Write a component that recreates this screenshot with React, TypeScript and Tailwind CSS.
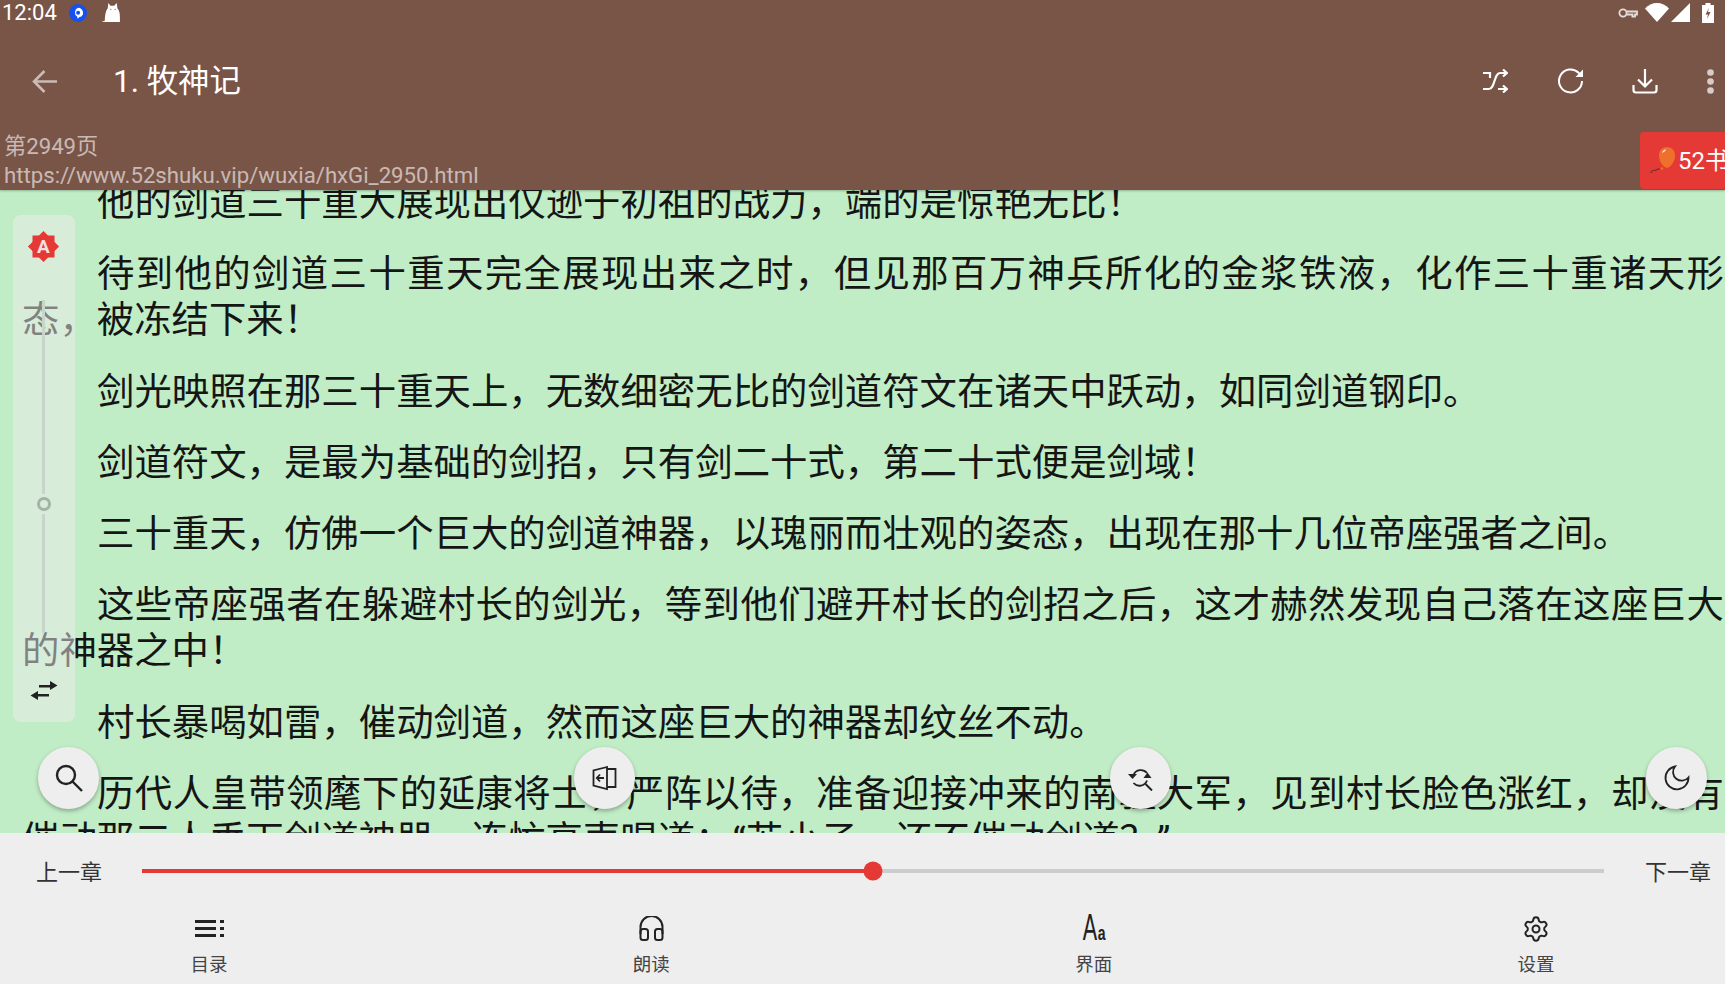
import React from "react";
import { Settings } from "lucide-react";

const paragraphs: string[][] = [
  ["他的剑道三十重大展现出仅逊于初祖的战力，端的是惊艳无比！"],
  ["待到他的剑道三十重天完全展现出来之时，但见那百万神兵所化的金浆铁液，化作三十重诸天形", "态，被冻结下来！"],
  ["剑光映照在那三十重天上，无数细密无比的剑道符文在诸天中跃动，如同剑道钢印。"],
  ["剑道符文，是最为基础的剑招，只有剑二十式，第二十式便是剑域！"],
  ["三十重天，仿佛一个巨大的剑道神器，以瑰丽而壮观的姿态，出现在那十几位帝座强者之间。"],
  ["这些帝座强者在躲避村长的剑光，等到他们避开村长的剑招之后，这才赫然发现自己落在这座巨大", "的神器之中！"],
  ["村长暴喝如雷，催动剑道，然而这座巨大的神器却纹丝不动。"],
  ["历代人皇带领麾下的延康将士，严阵以待，准备迎接冲来的南疆大军，见到村长脸色涨红，却没有", "催动那二人垂下剑道神器，连忙高声喝道：“苏小子，还不催动剑道？”"],
];

function StatusBar() {
  return (
    <div className="h-[30px] flex items-start justify-between text-white">
      <div className="flex items-center h-[25px]">
        <span className="ml-[2px] text-[22px] leading-[25px]">12:04</span>
        <svg className="ml-[12px] w-[18px] h-[18px]" viewBox="0 0 17 17">
          <circle cx="8.500" cy="8.500" r="8.500" fill="#1550f0" />
          <path d="M8.500 3.600a4.800 4.800 0 0 1 4.800 4.800c0 2.400-1.800 3.800-3.400 3.900l-1.600 1.600-.7-2a4.800 4.800 0 0 1 .9-8.300Z" fill="#fff" />
          <circle cx="8.600" cy="8.300" r="1.900" fill="#1550f0" />
        </svg>
        <svg className="ml-[14px] w-[21px] h-[21px]" viewBox="0 0 20 20" fill="#fff">
          <path d="M7 1l2 2.500h3.500L15 1l.6 5c1.800 2 2.400 5 2.400 8v5H5c-2 0-4-.4-4.500-1.400.8.6 2 .7 3 .4C4 13 4 9 6.400 6Z" />
          <circle cx="9.400" cy="7" r=".6" fill="#795548" />
          <circle cx="13.400" cy="7" r=".6" fill="#795548" />
        </svg>
      </div>
      <div className="flex items-center h-[25px] pr-[11px]">
        <svg className="w-[20px] h-[12px]" viewBox="0 0 20 12" fill="none" stroke="#fff" strokeWidth="1.800" opacity="0.8">
          <circle cx="5" cy="6" r="3.600" />
          <path d="M8.600 4.500H19v3h-2v2h-2.600v-2H8.600" />
        </svg>
        <svg className="ml-[7px] w-[24px] h-[19px]" viewBox="0 0 24 19" fill="#fff">
          <path d="M0 5.500C3 2 7.500 0 12 0s9 2 12 5.500L12 19Z" />
        </svg>
        <svg className="ml-[2px] w-[19px] h-[19px]" viewBox="0 0 19 19" fill="#fff">
          <path d="M19 0v19H0Z" />
        </svg>
        <svg className="ml-[12px] w-[12px] h-[20px]" viewBox="0 0 12 20">
          <path d="M3.500 0h5v2H12v18H0V2h3.500Z" fill="#fff" />
          <path d="M7 5 3.500 11.500H6L5 16l3.500-7H6Z" fill="#795548" />
        </svg>
      </div>
    </div>
  );
}

function Toolbar() {
  return (
    <div className="h-[102px] flex items-center relative">
      <svg className="ml-[32px] w-[25px] h-[25px]" viewBox="0 0 25 25" fill="none" stroke="#fff" strokeOpacity="0.6" strokeWidth="2.600">
        <path d="M25 12.500H2M12.500 2 2 12.500 12.500 23" />
      </svg>
      <span className="ml-[56px] pt-[2px] text-[31.400px] leading-[36px] text-white">1. 牧神记</span>
      <div className="flex-1" />
      <svg className="w-[26px] h-[24px]" viewBox="0 0 26 24" fill="none" stroke="#fff" strokeWidth="2.200">
        <path d="M1 4h7v5M1 20h6c6 0 5-16 11-16h7M21 .500 25 4l-4 3.500M16 20h9M21 16.500l4 3.500-4 3.500" />
      </svg>
      <svg className="ml-[50px] w-[26px] h-[26px]" viewBox="0 0 26 26" fill="none" stroke="#fff" strokeWidth="2">
        <path d="M24 13a11.500 11.500 0 1 1-3.400-8.200L24 8" />
        <path d="M25 1.500V9h-7.500Z" fill="#fff" stroke="none" />
      </svg>
      <svg className="ml-[48px] w-[26px] h-[26px]" viewBox="0 0 26 26" fill="none" stroke="#fff" strokeWidth="2.200">
        <path d="M1.500 17v5a2.500 2.500 0 0 0 2.500 2.500h18a2.500 2.500 0 0 0 2.500-2.500v-5M13 1v17M6 11.500l7 7 7-7" />
      </svg>
      <svg className="ml-[49px] mr-[11px] w-[7px] h-[25px]" viewBox="0 0 7 25" fill="#fff" fillOpacity="0.7">
        <circle cx="3.500" cy="3.500" r="3.300" />
        <circle cx="3.500" cy="12.500" r="3.300" />
        <circle cx="3.500" cy="21.500" r="3.300" />
      </svg>
    </div>
  );
}

function InfoRow() {
  return (
    <div className="h-[58px] flex justify-between">
      <div className="pl-[4px] text-white/60">
        <div className="text-[22.200px] leading-[29px]">第2949页</div>
        <div className="text-[22.200px] leading-[29px]">https://www.52shuku.vip/wuxia/hxGi_2950.html</div>
      </div>
      <div className="w-[85px] h-[57px] bg-[#e53935] rounded-l-[4px] flex items-center overflow-hidden whitespace-nowrap text-white text-[24px]">
        <svg className="ml-[10px] shrink-0 w-[26px] h-[27px]" viewBox="0 0 26 27">
          <path d="M1 26c0-3 3-2 5-3s2-1 4-1" fill="none" stroke="#4a3030" strokeWidth="1" />
          <path d="M17 0c4.700 0 8 3.500 8 8.500 0 6-4.500 12-8 12.500-3.500-.5-8-6-8-12.500C9 3.500 12.300 0 17 0Z" fill="#ef6f2c" />
          <path d="M10 22l1.500-2 2 1-1 2Z" fill="#ef6f2c" />
          <path d="M12 6c.5-2 2-3.500 4-3.700-.3 1.700-2 3-4 3.700Z" fill="#fff" fillOpacity="0.85" />
        </svg>
        <span className="ml-[2px] leading-none">52书</span>
      </div>
    </div>
  );
}

function SideBar() {
  return (
    <div className="absolute left-[13px] top-[25px] w-[62px] h-[507px] pr-[1px] rounded-[8px] bg-[#eeeeee]/50 flex flex-col items-center">
      <svg className="mt-[14px] w-[35px] h-[35px] shrink-0" viewBox="0 0 35 35">
        <rect x="6.500" y="6.500" width="22" height="22" fill="#e53935" />
        <rect x="6.500" y="6.500" width="22" height="22" fill="#e53935" transform="rotate(45 17.500 17.500)" />
        <text x="17.500" y="24" textAnchor="middle" fontSize="19" fontWeight="700" fill="#f3dcdc" fontFamily="Roboto, sans-serif">A</text>
      </svg>
      <div className="mt-[36px] w-[3px] h-[194px] bg-[#c6d6c9]" />
      <div className="my-[3px] w-[14px] h-[14px] shrink-0 rounded-full border-[3px] border-[#a3b3a6]" />
      <div className="w-[3px] h-[119px] bg-[#c6d6c9]" />
      <svg className="mt-[47px] w-[28px] h-[21px] shrink-0" viewBox="0 0 28 21" fill="#222">
        <path d="M9 5h11V1L27.500 5.500 20 10V7.400H9Z" />
        <path d="M19 14H8v-3L.5 15.500 8 20v-3.400h11Z" />
      </svg>
    </div>
  );
}

function Fab({ className, children }: { className: string; children: React.ReactNode }) {
  return (
    <div className={"absolute top-[557px] w-[61px] h-[62px] rounded-full bg-[#eeeeee] flex items-center justify-center shadow-[0_2px_4px_rgba(0,0,0,0.3)] " + className}>
      {children}
    </div>
  );
}

function Reader() {
  return (
    <div className="flex-1 relative overflow-hidden bg-[#c0edc6]">
      <div className="-mt-[10px] pl-[22px] text-[37.400px] leading-[46px] text-[#151515] whitespace-nowrap">
        {paragraphs.map((lines, i) => (
          <div key={i} className="mb-[25.250px]">
            {lines[1] ? (
              <>
                <div className="w-[1702px] indent-[75px] whitespace-normal text-justify [text-align-last:justify] [text-justify:inter-character]">{lines[0]}</div>
                <div>{lines[1]}</div>
              </>
            ) : (
              <div className="indent-[75px]">{lines[0]}</div>
            )}
          </div>
        ))}
      </div>
      <SideBar />
      <Fab className="left-[38px]">
        <svg className="w-[28px] h-[28px]" viewBox="0 0 28 28" fill="none" stroke="#222" strokeWidth="2.400">
          <circle cx="11" cy="11" r="9" />
          <path d="M17.500 17.500 27 27" />
        </svg>
      </Fab>
      <Fab className="left-[574px]">
        <svg className="w-[25px] h-[25px]" viewBox="0 0 25 25" fill="none" stroke="#222" strokeWidth="1.800">
          <path d="M15 1 1.500 4.500v15L15 23Z" />
          <path d="M15 3h8.500v18H15" />
          <path d="M12 12H5M8 8.500 4.800 12 8 15.500" />
        </svg>
      </Fab>
      <Fab className="left-[1110px]">
        <svg className="w-[27px] h-[25px]" viewBox="0 0 27 25" fill="none" stroke="#222" strokeWidth="1.800">
          <path d="M20 14.500a8 8 0 0 1-13.500 2.500" />
          <path d="M6.500 9a8 8 0 0 1 13.500-2" />
          <path d="M1 9h9L5.500 14Z" fill="#222" stroke="none" transform="translate(0 -1)" />
          <path d="M16.500 12h8L20.500 6.500Z" fill="#222" stroke="none" />
          <path d="M18.500 18l6.500 6.500" strokeWidth="2" />
        </svg>
      </Fab>
      <Fab className="left-[1646px]">
        <svg className="w-[26px] h-[26px]" viewBox="0 0 26 26" fill="none" stroke="#222" strokeWidth="1.800">
          <path d="M11 1.500a8.500 8.500 0 0 0 13.500 11A11.500 11.500 0 1 1 11 1.500Z" />
        </svg>
      </Fab>
    </div>
  );
}

function Tab({ label, children }: { label: string; children: React.ReactNode }) {
  return (
    <div className="w-[64px] flex flex-col items-center">
      <div className="h-[25px] flex items-center justify-center">{children}</div>
      <div className="mt-[12px] text-[18.500px] leading-[24px] text-[#444]">{label}</div>
    </div>
  );
}

function BottomPanel() {
  return (
    <div className="h-[151px] bg-[#eeeeee] shrink-0">
      <div className="h-[76px] flex items-center text-[#333] text-[22px]">
        <div className="w-[142px] pl-[36px] pt-[3px] leading-none">上一章</div>
        <div className="flex-1 h-[4px] bg-[#cccccc] relative">
          <div className="w-1/2 h-full bg-[#e53935]" />
          <div className="absolute left-1/2 top-1/2 -translate-x-1/2 -translate-y-1/2 w-[19px] h-[19px] rounded-full bg-[#e53935]" />
        </div>
        <div className="w-[121px] pl-[41px] pt-[3px] leading-none">下一章</div>
      </div>
      <div className="pt-[7px] pl-[177px] pr-[157px] flex justify-between">
        <Tab label="目录">
          <svg className="w-[29px] h-[17px]" viewBox="0 0 29 17" fill="#222">
            <rect x="0" y="0" width="21" height="3" />
            <rect x="0" y="7" width="21" height="3" />
            <rect x="0" y="14" width="21" height="3" />
            <rect x="25" y="0" width="4" height="3" />
            <rect x="25" y="7" width="4" height="3" />
            <rect x="25" y="14" width="4" height="3" />
          </svg>
        </Tab>
        <Tab label="朗读">
          <svg className="w-[25px] h-[25px]" viewBox="0 0 25 25" fill="none" stroke="#222" strokeWidth="2">
            <path d="M1.500 18V11a11 11 0 0 1 22 0v7" />
            <rect x="1.500" y="13" width="7.500" height="11" rx="2.500" />
            <rect x="16" y="13" width="7.500" height="11" rx="2.500" />
          </svg>
        </Tab>
        <Tab label="界面">
          <div className="flex items-end h-[25px] text-[#222] font-['Liberation_Sans',sans-serif] -ml-[3px]">
            <span className="text-[36px] leading-[26px] inline-block scale-x-[0.6] origin-center -mr-[4px]">A</span>
            <span className="text-[20px] leading-[15px] inline-block scale-x-[0.7] origin-center -ml-[2px] font-bold">a</span>
          </div>
        </Tab>
        <Tab label="设置">
          <Settings className="w-[28px] h-[28px] text-[#222]" strokeWidth={1.700} />
        </Tab>
      </div>
    </div>
  );
}

export default function App() {
  return (
    <div className="w-[1725px] h-[984px] flex flex-col overflow-hidden font-['Roboto','Noto_Sans_CJK_SC',sans-serif]">
      <div className="h-[190px] shrink-0 bg-[#795548] relative z-10 shadow-[0_1px_2px_rgba(0,0,0,0.25)]">
        <StatusBar />
        <Toolbar />
        <InfoRow />
      </div>
      <Reader />
      <BottomPanel />
    </div>
  );
}
